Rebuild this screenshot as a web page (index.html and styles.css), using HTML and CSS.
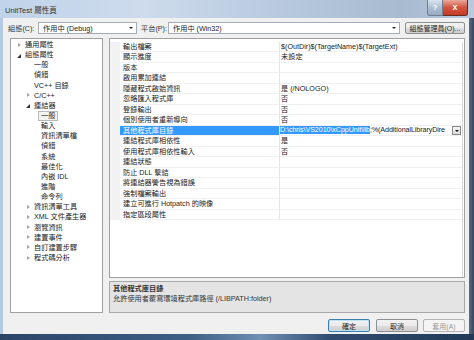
FILE: index.html
```html
<!DOCTYPE html>
<html lang="zh-Hant">
<head>
    <meta charset="UTF-8">
    <meta name="viewport" content="width=device-width, initial-scale=1.0">
    <title>UnitTest 屬性頁</title>
    <link rel="stylesheet" href="styles.css">
</head>
<body>
<div class="window">
    <div class="titlebar">
        <span class="title">UnitTest 屬性頁</span>
        <div class="caption-btns">
            <span class="btn-help">?</span>
            <span class="btn-close">x</span>
        </div>
    </div>

    <div class="client">
        <div class="toolbar">
            <span class="lbl lbl-config">組態(C):</span>
            <div class="combo combo-config"><span>作用中 (Debug)</span><span class="drop"></span></div>
            <span class="lbl lbl-platform">平台(P):</span>
            <div class="combo combo-platform"><span>作用中 (Win32)</span><span class="drop"></span></div>
            <button class="btn btn-manager">組態管理員(O)...</button>
        </div>

        <div class="main">
            <!-- 左側樹狀 -->
            <div class="tree">
                <div class="node l0"><span class="tw closed"></span>通用屬性</div>
                <div class="node l0"><span class="tw open"></span>組態屬性</div>
                <div class="node l1"><span class="tw"></span>一般</div>
                <div class="node l1"><span class="tw"></span>偵錯</div>
                <div class="node l1"><span class="tw"></span>VC++ 目錄</div>
                <div class="node l1"><span class="tw closed"></span>C/C++</div>
                <div class="node l1"><span class="tw open"></span>連結器</div>
                <div class="node l2"><span class="sel">一般</span></div>
                <div class="node l2">輸入</div>
                <div class="node l2">資訊清單檔</div>
                <div class="node l2">偵錯</div>
                <div class="node l2">系統</div>
                <div class="node l2">最佳化</div>
                <div class="node l2">內嵌 IDL</div>
                <div class="node l2">進階</div>
                <div class="node l2">命令列</div>
                <div class="node l1"><span class="tw closed"></span>資訊清單工具</div>
                <div class="node l1"><span class="tw closed"></span>XML 文件產生器</div>
                <div class="node l1"><span class="tw closed"></span>瀏覽資訊</div>
                <div class="node l1"><span class="tw closed"></span>建置事件</div>
                <div class="node l1"><span class="tw closed"></span>自訂建置步驟</div>
                <div class="node l1"><span class="tw closed"></span>程式碼分析</div>
            </div>

            <div class="right">
                <!-- 屬性表格 -->
                <div class="grid">
                    <div class="rows">
                        <div class="row"><span class="gut"></span><span class="name">輸出檔案</span><span class="val">$(OutDir)$(TargetName)$(TargetExt)</span></div>
                        <div class="row"><span class="gut"></span><span class="name">顯示進度</span><span class="val">未設定</span></div>
                        <div class="row"><span class="gut"></span><span class="name">版本</span><span class="val"></span></div>
                        <div class="row"><span class="gut"></span><span class="name">啟用累加連結</span><span class="val"></span></div>
                        <div class="row"><span class="gut"></span><span class="name">隱藏程式啟始資訊</span><span class="val">是 (/NOLOGO)</span></div>
                        <div class="row"><span class="gut"></span><span class="name">忽略匯入程式庫</span><span class="val">否</span></div>
                        <div class="row"><span class="gut"></span><span class="name">登錄輸出</span><span class="val">否</span></div>
                        <div class="row"><span class="gut"></span><span class="name">個別使用者重新導向</span><span class="val">否</span></div>
                        <div class="row current"><span class="gut"></span><span class="name">其他程式庫目錄</span><span class="val edit"><span class="edit-text"><span class="hl">D:\chris\VS2010\xCppUnit\lib</span>;%(AdditionalLibraryDire</span><span class="val-drop"></span></span></div>
                        <div class="row"><span class="gut"></span><span class="name">連結程式庫相依性</span><span class="val">是</span></div>
                        <div class="row"><span class="gut"></span><span class="name">使用程式庫相依性輸入</span><span class="val">否</span></div>
                        <div class="row"><span class="gut"></span><span class="name">連結狀態</span><span class="val"></span></div>
                        <div class="row"><span class="gut"></span><span class="name">防止 DLL 繫結</span><span class="val"></span></div>
                        <div class="row"><span class="gut"></span><span class="name">將連結器警告視為錯誤</span><span class="val"></span></div>
                        <div class="row"><span class="gut"></span><span class="name">強制檔案輸出</span><span class="val"></span></div>
                        <div class="row"><span class="gut"></span><span class="name">建立可進行 Hotpatch 的映像</span><span class="val"></span></div>
                        <div class="row"><span class="gut"></span><span class="name">指定區段屬性</span><span class="val"></span></div>
                    </div>
                </div>
                <div class="desc">
                    <div class="desc-title">其他程式庫目錄</div>
                    <div>允許使用者覆寫環境程式庫路徑 (/LIBPATH:folder)</div>
                </div>
            </div>
        </div>

        <div class="actions">
            <button class="btn btn-default">確定</button>
            <button class="btn">取消</button>
            <button class="btn" disabled>套用(A)</button>
        </div>
    </div>
    <div class="frame-bottom"></div>
</div>
</body>
</html>
```

FILE: styles.css
```css
* {
    box-sizing: border-box;
}
body {
    margin: 0;
    width: 474px;
    height: 340px;
    overflow: hidden;
    font-family: "Liberation Sans", "Noto Sans CJK TC", sans-serif;
    font-size: 7.2px;
    color: #222;
    background: linear-gradient(90deg, #b4cae3 0%, #c3d5ea 50%, #9fb4cc 97%, #33465e 100%);
}
.window {
    display: flex;
    flex-direction: column;
    height: 340px;
}

/* 標題列 */
.titlebar {
    height: 18px;
    display: flex;
    align-items: center;
    padding-left: 5px;
    background: linear-gradient(90deg, #c0d3ea 0%, #cddbec 30%, #b7c9de 60%, #a8bad0 85%, #b9cade 100%);
}
.title {
    font-size: 7.5px;
    color: #333;
    flex: 1;
    margin-top: 1px;
}
.caption-btns {
    display: flex;
    align-self: flex-start;
    margin-right: 6px;
}
.btn-help {
    width: 16px;
    height: 16px;
    text-align: center;
    line-height: 15px;
    font-size: 8px;
    font-weight: bold;
    color: #fff;
    background: linear-gradient(#d8e3ef, #aebfd3 50%, #98abc2);
    border: 1px solid #6e7f94;
    border-top: none;
    border-radius: 0 0 0 3px;
}
.btn-close {
    width: 25px;
    height: 16px;
    text-align: center;
    line-height: 14px;
    font-size: 9px;
    font-weight: bold;
    color: #fff;
    background: linear-gradient(#e9a99c, #d3523e 50%, #c33a25);
    border: 1px solid #6b2a20;
    border-top: none;
    border-left: none;
    border-radius: 0 0 3px 0;
}

/* 對話框主體 */
.client {
    margin: 0 5px 0 3px;
    height: 316px;
    background: #f0f0f0;
    display: flex;
    flex-direction: column;
}
.frame-bottom {
    flex: 1;
    background: linear-gradient(90deg, #2b4567, #3d5f86 40%, #6f8fb3 55%, #2f4b6e 70%, #223a58);
}

.toolbar {
    display: flex;
    align-items: center;
    height: 12px;
    margin-top: 4px;
    padding-left: 5px;
}
.lbl {
    white-space: nowrap;
    color: #333;
}
.lbl-config {
    width: 30px;
}
.lbl-platform {
    width: 27px;
    margin-left: 4px;
}
.combo {
    display: flex;
    align-items: center;
    height: 12px;
    padding-left: 4px;
    background: #fff;
    border: 1px solid #a5acb5;
}
.combo span:first-child {
    flex: 1;
}
.combo-config {
    width: 99px;
}
.combo-platform {
    width: 232px;
}
.drop {
    width: 0;
    height: 0;
    margin-right: 3px;
    border-left: 2px solid transparent;
    border-right: 2px solid transparent;
    border-top: 2px solid #222;
}

.btn {
    font-family: inherit;
    font-size: 7px;
    color: #222;
    height: 13px;
    width: 42px;
    padding: 0;
    border: 1px solid #8e8f8f;
    border-radius: 2px;
    background: linear-gradient(#f2f2f2, #ebebeb 50%, #dddddd 51%, #cfcfcf);
}
.btn:disabled {
    color: #9a9a9a;
    border-color: #b5b5b5;
    background: #f4f4f4;
}
.btn-default {
    border-color: #3c7fb1;
    box-shadow: inset 0 0 0 1px #bde3f7;
}
.btn-manager {
    width: 60px;
    height: 12px;
    margin-left: 5px;
}

.main {
    display: flex;
    margin-top: 4px;
    padding-left: 7px;
    height: 275px;
}

/* 樹狀清單 */
.tree {
    width: 93px;
    background: #fff;
    border: 1px solid #a0a0a0;
    padding-top: 1px;
}
.node {
    height: 10.15px;
    line-height: 10.15px;
    display: flex;
    align-items: center;
    white-space: nowrap;
}
.node.l0 {
    padding-left: 5px;
}
.node.l1 {
    padding-left: 14px;
}
.node.l2 {
    padding-left: 30px;
}
.tw {
    width: 7px;
    height: 7px;
    margin-right: 2px;
    position: relative;
}
.tw.closed::before {
    content: "";
    position: absolute;
    left: 2px;
    top: 1px;
    border-left: 3px solid #a6a6a6;
    border-top: 2.5px solid transparent;
    border-bottom: 2.5px solid transparent;
}
.tw.open::before {
    content: "";
    position: absolute;
    left: 1px;
    top: 2px;
    border-right: 4px solid #333;
    border-top: 4px solid transparent;
}
.sel {
    border: 1px solid #b9b9b9;
    background: #f3f3f3;
    padding: 0 2px;
    line-height: 8px;
    margin-left: -3px;
}

.right {
    display: flex;
    flex-direction: column;
    width: 356px;
    margin-left: 6px;
}

/* 屬性表格 */
.grid {
    height: 240px;
    background: #fff;
    border: 1px solid #a0a0a0;
    padding: 2.5px 1px 0 0;
}
.rows {
    height: 100%;
    border-right: 1px solid #d8d8d8;
}
.row {
    display: flex;
    height: 10.5px;
    line-height: 10px;
}
.gut {
    width: 10px;
    background: #f2f2f2;
}
.name {
    width: 160px;
    padding-left: 3px;
    border-bottom: 1px solid #f0f0f0;
    border-right: 1px solid #e4e4e4;
    white-space: nowrap;
}
.val {
    flex: 1;
    min-width: 0;
    padding-left: 1px;
    border-bottom: 1px solid #f0f0f0;
    white-space: nowrap;
    overflow: hidden;
}
.row.current .name {
    background: #3399ff;
    color: #fff;
}
.val.edit {
    display: flex;
    align-items: center;
    padding-left: 0;
    padding-right: 1px;
}
.edit-text {
    flex: 1;
    min-width: 0;
    overflow: hidden;
    letter-spacing: -0.1px;
}
.hl {
    background: #3399ff;
    color: #fff;
}
.val-drop {
    flex: none;
    width: 9px;
    height: 9px;
    border: 1px solid #8a8a8a;
    background: linear-gradient(#f6f6f6, #dcdcdc);
    position: relative;
}
.val-drop::before {
    content: "";
    position: absolute;
    left: 2px;
    top: 3px;
    border-left: 2px solid transparent;
    border-right: 2px solid transparent;
    border-top: 2px solid #111;
}

/* 說明區 */
.desc {
    height: 32px;
    margin-top: 3px;
    background: #e4e4e4;
    border: 1px solid #a8a8a8;
    padding: 2px 3px;
    line-height: 10px;
    color: #333;
}
.desc-title {
    font-weight: bold;
}

.actions {
    display: flex;
    justify-content: flex-end;
    gap: 5px;
    margin-top: 6px;
    padding-right: 4px;
}
.actions .btn-default {
    margin-right: 1px;
}
```
